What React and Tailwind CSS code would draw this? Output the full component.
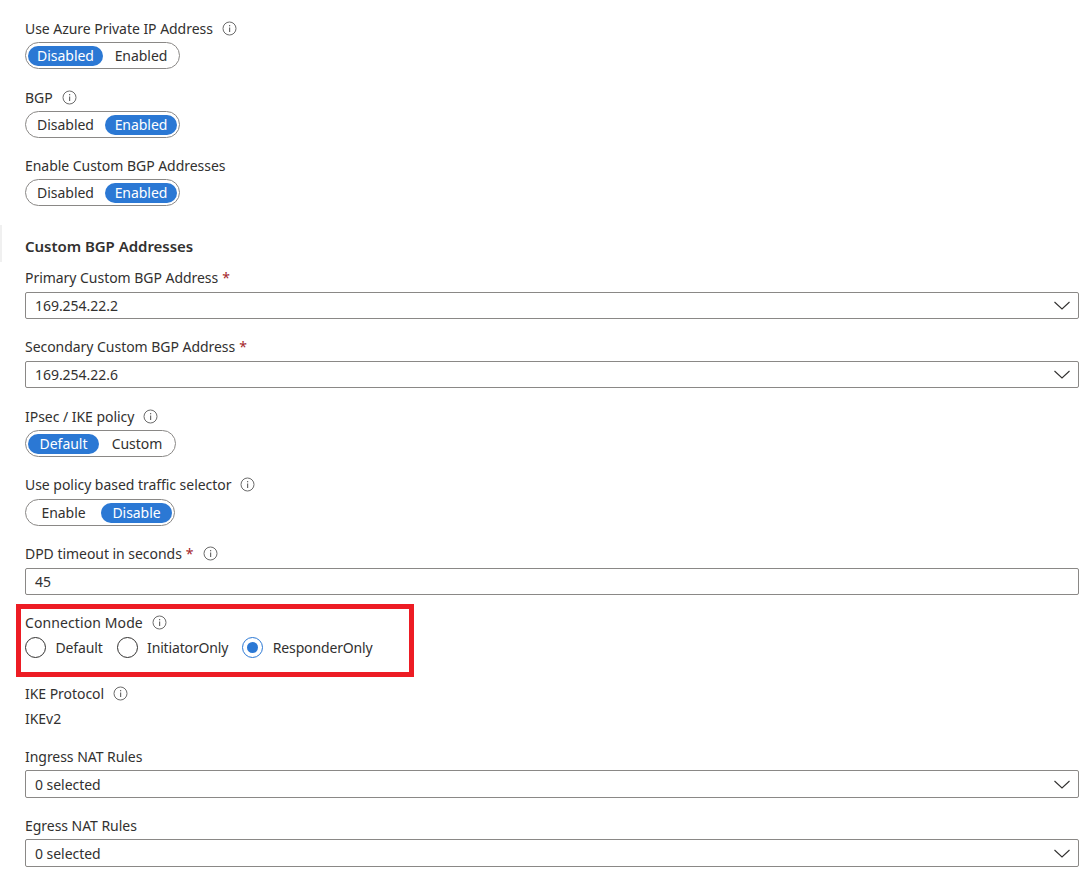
import React from 'react';

const Info = () => (
  <svg width="15" height="15" viewBox="0 0 15 15" className="ml-[9px] shrink-0 text-[#6b6b6b]">
    <circle cx="7.5" cy="7.5" r="6.5" fill="none" stroke="currentColor" strokeWidth="1" />
    <rect x="7" y="6.5" width="1.2" height="4.5" fill="currentColor" />
    <rect x="7" y="4" width="1.2" height="1.3" fill="currentColor" />
  </svg>
);

const Chevron = () => (
  <svg width="16" height="9" viewBox="0 0 16 9" fill="none" className="text-[#323130]">
    <path d="M0.5 1L8 8L15.5 1" stroke="currentColor" strokeWidth="1.1" />
  </svg>
);

const Label = ({ children, info, required, className = '' }) => (
  <div className={`flex h-5 items-center text-[#323130] ${className}`}>
    <span>{children}</span>
    {required && <span className="ml-1 text-[#a4262c]">*</span>}
    {info && <Info />}
  </div>
);

const Toggle = ({ options, active, widths }) => (
  <div className="flex h-[27px] w-fit items-center gap-[2px] rounded-full border border-[#8a8886] px-[2px]">
    {options.map((o, i) => (
      <span
        key={o}
        style={{ width: widths[i] }}
        className={`flex h-5 items-center justify-center rounded-full ${i === active ? 'bg-[#2b78d4] text-white' : 'text-[#323130]'}`}
      >
        {o}
      </span>
    ))}
  </div>
);

const Select = ({ value, className = 'mt-[5px] h-[27px]' }) => (
  <div className={`flex w-[1054px] items-center justify-between rounded-[2px] border border-[#8a8886] pl-[9px] pr-[8px] text-[#323130] ${className}`}>
    <span>{value}</span>
    <Chevron />
  </div>
);

const Radio = ({ label, checked, className = '' }) => (
  <div className={`flex items-center ${className}`}>
    <span className={`flex h-[21px] w-[21px] items-center justify-center rounded-full border ${checked ? 'border-[#2b78d4]' : 'border-[#323130]'}`}>
      {checked && <span className="h-[11px] w-[11px] rounded-full bg-[#2b78d4]" />}
    </span>
    <span className="ml-[9.5px] tracking-[-0.15px] text-[#323130]">{label}</span>
  </div>
);

export default function App() {
  return (
    <div className="relative h-[873px] w-[1086px] overflow-hidden bg-white pl-[25px] pt-[18px] font-['Noto_Sans',sans-serif] text-[14px] tracking-[-0.04px]">
      {/* section marker on the left edge */}
      <div className="absolute left-0 top-[225px] h-[37px] w-[2px] bg-[#f0f0f0]" />
      {/* red highlight round connection mode */}
      <div className="pointer-events-none absolute left-[16px] top-[604px] h-[73px] w-[398px] border-[5px] border-[#ed1c24]" />

      <Label info>Use Azure Private IP Address</Label>
      <div className="mt-[4px]"><Toggle options={['Disabled', 'Enabled']} active={0} widths={[75, 72]} /></div>

      <Label info className="mt-[18px]">BGP</Label>
      <div className="mt-[4px]"><Toggle options={['Disabled', 'Enabled']} active={1} widths={[75, 72]} /></div>

      <Label className="mt-[17px]">Enable Custom BGP Addresses</Label>
      <div className="mt-[4px]"><Toggle options={['Disabled', 'Enabled']} active={1} widths={[75, 72]} /></div>

      <div className="mt-[30px] flex h-5 items-center text-[15px] font-semibold text-[#323130]">Custom BGP Addresses</div>

      <Label required className="mt-[11px]">Primary Custom BGP Address</Label>
      <Select value="169.254.22.2" />

      <Label required className="mt-[17px]">Secondary Custom BGP Address</Label>
      <Select value="169.254.22.6" />

      <Label info className="mt-[18px]">IPsec / IKE policy</Label>
      <div className="mt-[4px]"><Toggle options={['Default', 'Custom']} active={0} widths={[71, 72]} /></div>

      <Label info className="mt-[17px]">Use policy based traffic selector</Label>
      <div className="mt-[5px]"><Toggle options={['Enable', 'Disable']} active={1} widths={[71, 71]} /></div>

      <Label required info className="mt-[17px]">DPD timeout in seconds</Label>
      <div className="mt-[5px] flex h-[27px] w-[1054px] items-center rounded-[2px] border border-[#8a8886] pl-[9px] text-[#323130]">45</div>

      <Label info className="mt-[17px] tracking-[0.1px]">Connection Mode</Label>
      <div className="mt-[5px] flex h-[21px] items-center">
        <Radio label="Default" />
        <Radio label="InitiatorOnly" className="ml-[14px]" />
        <Radio label="ResponderOnly" checked className="ml-[14px]" />
      </div>

      <Label info className="mt-[25px]">IKE Protocol</Label>
      <div className="mt-[5px] flex h-5 items-center text-[#323130]">IKEv2</div>

      <Label className="mt-[18px]">Ingress NAT Rules</Label>
      <Select value="0 selected" className="mt-[4px] h-[28px]" />

      <Label className="mt-[17px]">Egress NAT Rules</Label>
      <Select value="0 selected" className="mt-[4px] h-[28px]" />
    </div>
  );
}
